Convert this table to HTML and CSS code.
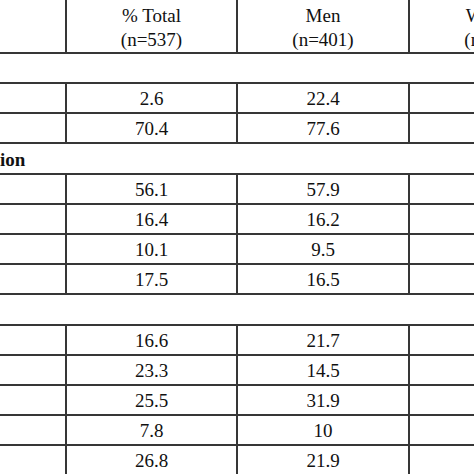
FILE: index.html
```html
<!DOCTYPE html>
<html lang="en">
<head>
<meta charset="utf-8">
<title>Table</title>
<link rel="stylesheet" href="styles.css">
</head>
<body>
<table class="data">
  <colgroup>
    <col class="c-label">
    <col class="c-num">
    <col class="c-num c-wide">
    <col class="c-num c-wide">
  </colgroup>
  <thead>
    <tr>
      <th class="lab"></th>
      <th class="num">% Total<br>(n=537)</th>
      <th class="num">Men<br>(n=401)</th>
      <th class="num">Women<br>(n=136)</th>
    </tr>
  </thead>
  <tbody>
    <tr class="sec first"><td colspan="4">Sex</td></tr>
    <tr><td class="lab"></td><td class="num">2.6</td><td class="num">22.4</td><td class="num">—</td></tr>
    <tr><td class="lab"></td><td class="num">70.4</td><td class="num">77.6</td><td class="num">49.2</td></tr>
    <tr class="sec"><td colspan="4">Education</td></tr>
    <tr><td class="lab"></td><td class="num">56.1</td><td class="num">57.9</td><td class="num">50.8</td></tr>
    <tr><td class="lab"></td><td class="num">16.4</td><td class="num">16.2</td><td class="num">17.0</td></tr>
    <tr><td class="lab"></td><td class="num">10.1</td><td class="num">9.5</td><td class="num">11.9</td></tr>
    <tr><td class="lab"></td><td class="num">17.5</td><td class="num">16.5</td><td class="num">20.4</td></tr>
    <tr class="sec"><td colspan="4">Age</td></tr>
    <tr><td class="lab"></td><td class="num">16.6</td><td class="num">21.7</td><td class="num">1.6</td></tr>
    <tr><td class="lab"></td><td class="num">23.3</td><td class="num">14.5</td><td class="num">49.2</td></tr>
    <tr><td class="lab"></td><td class="num">25.5</td><td class="num">31.9</td><td class="num">6.6</td></tr>
    <tr><td class="lab"></td><td class="num">7.8</td><td class="num">10</td><td class="num">1.3</td></tr>
    <tr><td class="lab"></td><td class="num">26.8</td><td class="num">21.9</td><td class="num">41.2</td></tr>
  </tbody>
</table>
</body>
</html>
```
FILE: styles.css
```css
html, body {
  margin: 0;
  padding: 0;
  background: #ffffff;
}
body {
  width: 474px;
  height: 474px;
  overflow: hidden;
  font-family: "Liberation Serif", "Times New Roman", serif;
  font-size: 19px;
  color: #111111;
}
.data {
  border-collapse: separate;
  border-spacing: 0;
  table-layout: fixed;
  width: 642px;
  margin: -10px 0 0 -62px;
}
.c-label { width: 127px; }
.c-num { width: 171px; }
.c-wide { width: 172px; }

.data th,
.data td {
  padding: 0;
  border-bottom: 2px solid #363636;
}
.data th {
  font-weight: normal;
  line-height: 24px;
  padding-top: 14px;
  vertical-align: bottom;
}
.data .num {
  text-align: center;
  border-left: 2px solid #363636;
}
.data td.num,
.data td.lab {
  padding-top: 2px;
  line-height: 26px;
}
.sec td {
  font-weight: bold;
  text-align: left;
  padding: 2px 0 0 4px;
  line-height: 27px;
}
.sec.first td {
  line-height: 26px;
}
```
